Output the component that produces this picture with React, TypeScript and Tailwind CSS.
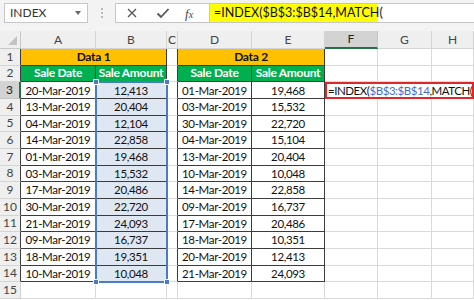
import React from 'react';

const data1: [string, string][] = [
  ['20-Mar-2019', '12,413'],
  ['13-Mar-2019', '20,404'],
  ['04-Mar-2019', '12,104'],
  ['14-Mar-2019', '22,858'],
  ['01-Mar-2019', '19,468'],
  ['03-Mar-2019', '15,532'],
  ['17-Mar-2019', '20,486'],
  ['30-Mar-2019', '22,720'],
  ['21-Mar-2019', '24,093'],
  ['09-Mar-2019', '16,737'],
  ['18-Mar-2019', '19,351'],
  ['10-Mar-2019', '10,048'],
];

const data2: [string, string][] = [
  ['01-Mar-2019', '19,468'],
  ['03-Mar-2019', '15,532'],
  ['30-Mar-2019', '22,720'],
  ['04-Mar-2019', '15,104'],
  ['13-Mar-2019', '20,404'],
  ['10-Mar-2019', '10,048'],
  ['14-Mar-2019', '22,858'],
  ['09-Mar-2019', '16,737'],
  ['17-Mar-2019', '20,486'],
  ['18-Mar-2019', '10,351'],
  ['20-Mar-2019', '12,413'],
  ['21-Mar-2019', '24,093'],
];

const colLetters = ['A', 'B', 'C', 'D', 'E', 'F', 'G', 'H'];

const grid = 'border-r border-b border-[#dadada]';
const dark = 'border-r border-b border-[#3c3c3c]';
const rowH = 'h-[16.67px]';
const cellText = 'text-[11.5px] tracking-[-0.35px] text-[#111] whitespace-nowrap';
const headText = 'text-[12px] tracking-[-0.3px] font-bold whitespace-nowrap';

const FormulaBar: React.FC = () => (
  <div className="h-[31px] bg-[#f3f3f3] flex items-start pt-[3px] pl-[4px]">
    {/* Name box */}
    <div className="w-[84px] h-[20px] bg-white border border-[#c6c6c6] flex items-center justify-between pl-[5px] pr-[6px]">
      <span className="text-[12px] text-[#333]">INDEX</span>
      <span className="w-0 h-0 border-l-[3px] border-r-[3px] border-t-[4px] border-l-transparent border-r-transparent border-t-[#666]" />
    </div>
    {/* Separator */}
    <div className="w-[27px] h-[20px] flex flex-col items-center justify-center gap-[2px]">
      <span className="w-[2px] h-[2px] bg-[#bbb]" />
      <span className="w-[2px] h-[2px] bg-[#bbb]" />
      <span className="w-[2px] h-[2px] bg-[#bbb]" />
    </div>
    {/* Cancel / Enter / fx */}
    <div className="w-[94px] h-[20px] bg-white border border-[#c6c6c6] border-r-0 flex items-center">
      <svg width="12" height="12" viewBox="0 0 12 12" className="ml-[10px]">
        <path d="M2 2 L10 10 M10 2 L2 10" stroke="#555" strokeWidth="1.3" />
      </svg>
      <svg width="14" height="12" viewBox="0 0 14 12" className="ml-[18px]">
        <path d="M1.5 6.5 L5 10 L12.5 2" stroke="#555" strokeWidth="1.8" fill="none" />
      </svg>
      <span className="ml-[15px] text-[13px] italic text-[#444] leading-none" style={{ fontFamily: '"Liberation Serif", serif' }}>
        f<span className="text-[10px]">x</span>
      </span>
    </div>
    {/* Formula input */}
    <div className="flex-1 h-[20px] bg-white border border-[#c6c6c6] border-r-0 flex">
      <div className="w-[168px] h-full bg-[#ffff00] flex items-center pl-[4px]">
        <span className="text-[12.5px] text-[#111] whitespace-nowrap">=INDEX($B$3:$B$14,MATCH(</span>
      </div>
    </div>
  </div>
);

export default function App() {
  const rows: React.ReactNode[] = [];

  for (let r = 1; r <= 15; r++) {
    const inTable = r <= 14;
    const rowSel = r === 3;
    rows.push(
      <div
        key={`rh${r}`}
        className={`${rowH} flex items-center justify-center text-[12px] border-b ${
          rowSel
            ? 'bg-[#d3d3d3] text-[#222] border-[#c4c4c4] border-r-2 border-r-[#217346]'
            : `bg-[#efefef] text-[#444] border-[#d4d4d4] border-r ${inTable ? 'border-r-[#3c3c3c]' : ''}`
        }`}
      >
        {r}
      </div>
    );

    if (r === 1) {
      rows.push(
        <div key="a1" className={`${rowH} col-span-2 bg-[#ffc000] ${dark} flex items-center justify-center ${headText} text-[#111]`}>
          Data 1
        </div>
      );
      rows.push(<div key="c1" className={`${rowH} bg-white border-r border-b border-[#3c3c3c] border-b-[#dadada]`} />);
      rows.push(
        <div key="d1" className={`${rowH} col-span-2 bg-[#ffc000] ${dark} flex items-center justify-center ${headText} text-[#111]`}>
          Data 2
        </div>
      );
    } else if (r === 2) {
      ['Sale Date', 'Sale Amount'].forEach((t, i) =>
        rows.push(
          <div key={`h1${i}`} className={`${rowH} bg-[#00b050] ${dark} flex items-center justify-center ${headText} text-white`}>
            {t}
          </div>
        )
      );
      rows.push(<div key="c2" className={`${rowH} bg-white border-r border-b border-[#3c3c3c] border-b-[#dadada]`} />);
      ['Sale Date', 'Sale Amount'].forEach((t, i) =>
        rows.push(
          <div key={`h2${i}`} className={`${rowH} bg-[#00b050] ${dark} flex items-center justify-center ${headText} text-white`}>
            {t}
          </div>
        )
      );
    } else if (inTable) {
      const [d1, a1] = data1[r - 3];
      const [d2, a2] = data2[r - 3];
      rows.push(<div key={`a${r}`} className={`${rowH} bg-white ${dark} flex items-center justify-center ${cellText}`}>{d1}</div>);
      rows.push(<div key={`b${r}`} className={`${rowH} bg-[#dfe7f3] ${dark} flex items-center justify-center ${cellText}`}>{a1}</div>);
      rows.push(<div key={`c${r}`} className={`${rowH} bg-white border-r border-b border-[#3c3c3c] border-b-[#dadada]`} />);
      rows.push(<div key={`d${r}`} className={`${rowH} bg-white ${dark} flex items-center justify-center ${cellText}`}>{d2}</div>);
      rows.push(<div key={`e${r}`} className={`${rowH} bg-white ${dark} flex items-center justify-center ${cellText}`}>{a2}</div>);
    } else {
      for (let c = 0; c < 5; c++) rows.push(<div key={`x${r}${c}`} className={`${rowH} bg-white ${grid}`} />);
    }

    if (r === 3) {
      rows.push(
        <div key="f3" className={`${rowH} col-span-3 bg-white border-2 border-[#e0262b] flex items-center pl-px text-[11.5px] tracking-[-0.45px] text-[#111] whitespace-nowrap overflow-hidden`}>
          <span>=INDEX(</span>
          <span className="text-[#3f6fd0]">$B$3:$B$14</span>
          <span>,MATCH(</span>
          <span className="w-px h-[12px] bg-[#111] ml-px" />
        </div>
      );
    } else {
      for (let c = 0; c < 3; c++) rows.push(<div key={`r${r}${c}`} className={`${rowH} bg-white ${grid}`} />);
    }
  }

  return (
    <div className="w-[474px] h-[300px] overflow-hidden bg-white" style={{ fontFamily: 'Lato, "Liberation Sans", sans-serif' }}>
      <FormulaBar />
      <div className="relative">
        <div className="grid grid-cols-[21px_75px_71px_11px_74px_73px_53px_54px_1fr]">
          {/* Column headers */}
          <div className="h-[18px] bg-[#efefef] border-r border-b border-[#c8c8c8] relative">
            <span className="absolute right-[3px] bottom-[3px] w-0 h-0 border-b-[9px] border-l-[9px] border-b-[#c3c3c3] border-l-transparent" />
          </div>
          {colLetters.map((l) => (
            <div
              key={l}
              className={`h-[18px] flex items-center justify-center text-[12px] border-r ${
                l === 'F'
                  ? 'bg-[#d3d3d3] text-[#222] border-b-2 border-b-[#217346] border-r-[#c4c4c4]'
                  : 'bg-[#efefef] text-[#444] border-b border-[#d4d4d4]'
              }`}
            >
              {l}
            </div>
          ))}
          {rows}
        </div>

        {/* Selected range B3:B14 */}
        <div className="absolute left-[95px] top-[50px] w-[73px] h-[202px] border-2 border-[#4a7bc8] pointer-events-none">
          <span className="absolute -left-[4px] -top-[4px] w-[6px] h-[6px] bg-[#4a7bc8] border border-white" />
          <span className="absolute -right-[4px] -top-[4px] w-[6px] h-[6px] bg-[#4a7bc8] border border-white" />
          <span className="absolute -left-[4px] -bottom-[4px] w-[6px] h-[6px] bg-[#4a7bc8] border border-white" />
          <span className="absolute -right-[4px] -bottom-[4px] w-[6px] h-[6px] bg-[#4a7bc8] border border-white" />
        </div>
      </div>
    </div>
  );
}
